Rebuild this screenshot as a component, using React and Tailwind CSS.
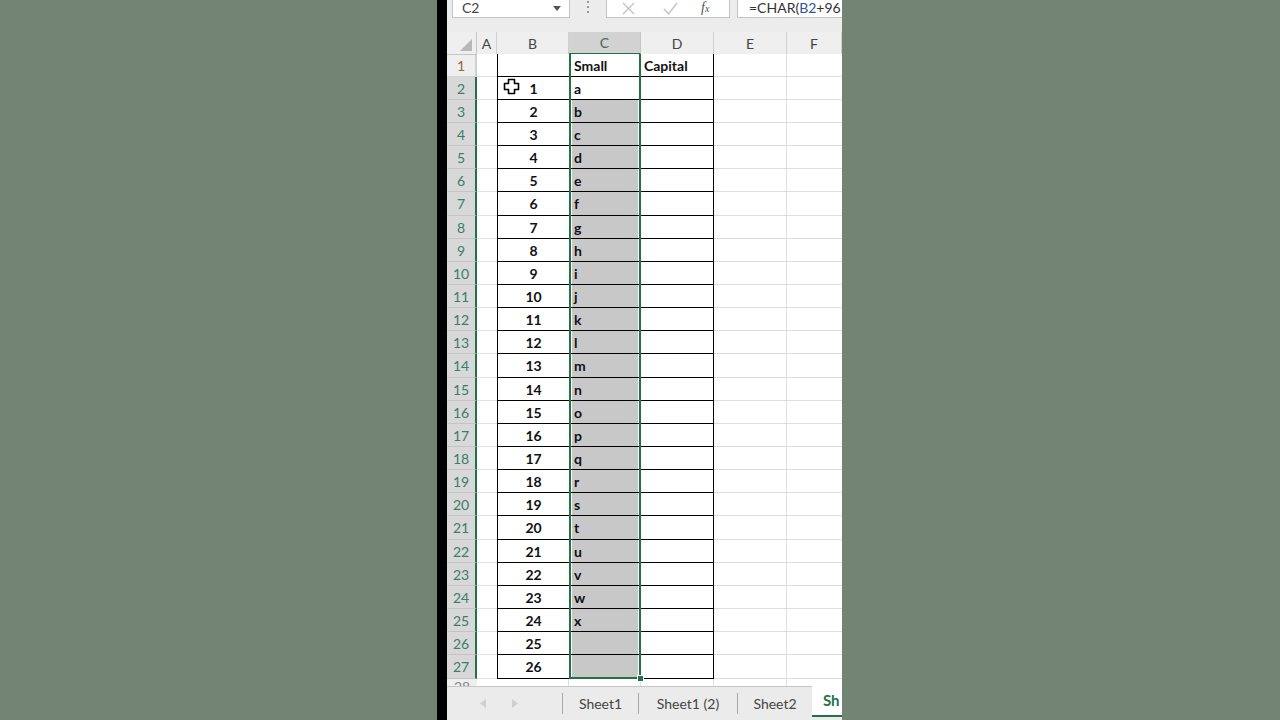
import React from 'react';

const cols = 'grid grid-cols-[30px_20px_72px_72px_73px_73px_55px]';
const letters = 'abcdefghijklmnopqrstuvwx';

function Cursor() {
  return (
    <svg width="17" height="17" viewBox="0 0 17 17" className="absolute left-[5px] top-[1px]">
      <path
        d="M5.5 1.5h6v4h4v6h-4v4h-6v-4h-4v-6h4z"
        fill="#fff"
        stroke="#000"
        strokeWidth="1.6"
        strokeLinejoin="round"
      />
    </svg>
  );
}

function Row({ r }) {
  const sel = r >= 2;
  const letter = r >= 2 && r <= 25 ? letters[r - 2] : '';
  const tall = r === 7 || r === 14 || r === 21 || r === 27;
  return (
    <div className={tall ? `${cols} h-[24px]` : `${cols} h-[23px]`}>
      <div
        className={
          sel
            ? 'flex items-center justify-center border-b border-b-[#c4c4c4] border-r-2 border-r-[#217346] bg-[#d8d8d8] text-[#3b7c6a]'
            : 'flex items-center justify-center border-b border-b-[#d4d4d4] border-r-2 border-r-[#d0d0d0] bg-[#efefef] text-[#8a6a30]'
        }
      >
        {r}
      </div>
      <div className="border-b border-[#e0e0e0] bg-white" />
      <div className="relative flex items-center justify-center border-l border-b border-black bg-white font-bold text-[#111]">
        {r === 2 && <Cursor />}
        {sel ? r - 1 : ''}
      </div>
      <div
        className={
          r === 27
            ? 'relative flex flex-col border-x-2 border-x-[#217346] border-b-2 border-b-[#217346] bg-white'
            : 'relative flex flex-col border-x-2 border-x-[#217346] bg-white'
        }
      >
        <div
          className={
            r >= 3
              ? 'mx-[1px] flex flex-1 items-center bg-[#c8c8c8] pl-[2px] font-bold text-[#111]'
              : 'mx-[1px] flex flex-1 items-center bg-white pl-[2px] font-bold text-[#111]'
          }
        >
          {r === 1 ? 'Small' : letter}
        </div>
        {r < 27 && <div className="h-px shrink-0 bg-black" />}
        {r === 27 && (
          <div className="absolute -right-[5px] -bottom-[5px] h-[7px] w-[7px] border border-white bg-[#217346]" />
        )}
      </div>
      <div className="flex items-center border-r border-b border-black bg-white pl-[3px] font-bold text-[#111]">
        {r === 1 ? 'Capital' : ''}
      </div>
      <div className="border-r border-b border-[#dedede] bg-white" />
      <div className="border-b border-[#dedede] bg-white" />
    </div>
  );
}

function Sheet() {
  return (
    <div className="flex h-[720px] w-[395px] flex-col overflow-hidden bg-[#ececec] text-[14px] font-['Lato','Liberation_Sans',sans-serif]">
      {/* formula bar */}
      <div className="relative h-[18px] shrink-0">
        <div className="absolute left-[5px] top-[-4px] flex h-[22px] w-[118px] items-center justify-between border border-[#c6c6c6] bg-white pl-[9px] pr-[8px] text-[#444]">
          <span className="mt-[2px] leading-none">C2</span>
          <svg width="8" height="5" viewBox="0 0 8 5" className="mt-[2px]">
            <path d="M0 0h8L4 5z" fill="#555" />
          </svg>
        </div>
        <div className="absolute left-[140px] top-[1px] flex flex-col gap-[3px]">
          <span className="h-[2px] w-[2px] bg-[#9a9a9a]" />
          <span className="h-[2px] w-[2px] bg-[#9a9a9a]" />
          <span className="h-[2px] w-[2px] bg-[#9a9a9a]" />
        </div>
        <div className="absolute left-[159px] top-[-4px] flex h-[22px] w-[124px] items-center border border-[#c6c6c6] bg-white">
          <svg width="13" height="13" viewBox="0 0 13 13" className="ml-[15px] mt-[2px]">
            <path d="M1 1l11 11M12 1L1 12" stroke="#c4c4c4" strokeWidth="1.4" />
          </svg>
          <svg width="15" height="13" viewBox="0 0 15 13" className="ml-[28px] mt-[2px]">
            <path d="M1 7l4.5 5L14 1" stroke="#c4c4c4" strokeWidth="1.4" fill="none" />
          </svg>
          <span className="ml-[23px] mt-[2px] font-['Liberation_Serif',serif] text-[14px] italic leading-none text-[#555]">
            f<span className="text-[10px]">x</span>
          </span>
        </div>
        <div className="absolute left-[290px] top-[-4px] flex h-[22px] w-[120px] items-center border border-[#c6c6c6] bg-white pl-[11px] text-[#333]">
          <span className="mt-[2px] whitespace-nowrap leading-none">
            =CHAR(<span className="text-[#2e5597]">B2</span>+96
          </span>
        </div>
      </div>
      <div className="h-[14px] shrink-0" />

      {/* column headers */}
      <div className={`${cols} h-[22px] shrink-0 text-[#444]`}>
        <div className="relative border-r border-b border-[#c6c6c6] bg-[#efefef]">
          <svg width="12" height="12" viewBox="0 0 12 12" className="absolute right-[4px] bottom-[3px]">
            <path d="M12 0v12H0z" fill="#b8b8b8" />
          </svg>
        </div>
        {['A', 'B', 'C', 'D', 'E', 'F'].map((c) => (
          <div
            key={c}
            className={
              c === 'C'
                ? 'flex items-center justify-center border-r border-r-[#c6c6c6] border-b-2 border-b-[#217346] bg-[#d2d2d2] text-[#3f6a58]'
                : 'flex items-center justify-center border-r border-r-[#d0d0d0] border-b border-b-[#c6c6c6] bg-[#efefef]'
            }
          >
            {c}
          </div>
        ))}
      </div>

      {/* rows */}
      <div className="shrink-0">
        {Array.from({ length: 27 }, (_, i) => (
          <Row key={i} r={i + 1} />
        ))}
      </div>
      <div className={`${cols} h-[7px] shrink-0 overflow-hidden`}>
        <div className="flex justify-center bg-[#efefef] pt-[1px] text-[#888] leading-none">28</div>
        <div className="bg-white" />
        <div className="border-r border-[#dedede] bg-white" />
        <div className="border-r border-[#dedede] bg-white" />
        <div className="border-r border-[#dedede] bg-white" />
        <div className="border-r border-[#dedede] bg-white" />
        <div className="bg-white" />
      </div>

      {/* sheet tabs */}
      <div className="flex h-[34px] shrink-0 items-stretch border-t border-[#c6c6c6] bg-[#ebebeb] text-[#444]">
        <div className="flex w-[115px] items-center gap-[26px] pl-[33px]">
          <svg width="6" height="9" viewBox="0 0 6 9">
            <path d="M6 0v9L0 4.5z" fill="#cfcfcf" />
          </svg>
          <svg width="6" height="9" viewBox="0 0 6 9">
            <path d="M0 0v9l6-4.5z" fill="#cfcfcf" />
          </svg>
        </div>
        <div className="my-[6px] w-px bg-[#a8a8a8]" />
        <div className="flex w-[75px] items-center justify-center">Sheet1</div>
        <div className="my-[6px] w-px bg-[#a8a8a8]" />
        <div className="flex w-[98px] items-center justify-center">Sheet1 (2)</div>
        <div className="my-[6px] w-px bg-[#a8a8a8]" />
        <div className="flex w-[74px] items-center justify-center">Sheet2</div>
        <div className="-mt-px mb-[3px] flex flex-1 items-center border-b-2 border-[#217346] bg-white pl-[11px] text-[15px] font-bold text-[#217346]">
          Sh
        </div>
      </div>
    </div>
  );
}

export default function App() {
  return (
    <div className="flex h-[720px] w-[1280px] overflow-hidden bg-[#728575]">
      <div className="w-[437px] shrink-0" />
      <div className="w-[10px] shrink-0 bg-black" />
      <Sheet />
      <div className="flex-1" />
    </div>
  );
}
